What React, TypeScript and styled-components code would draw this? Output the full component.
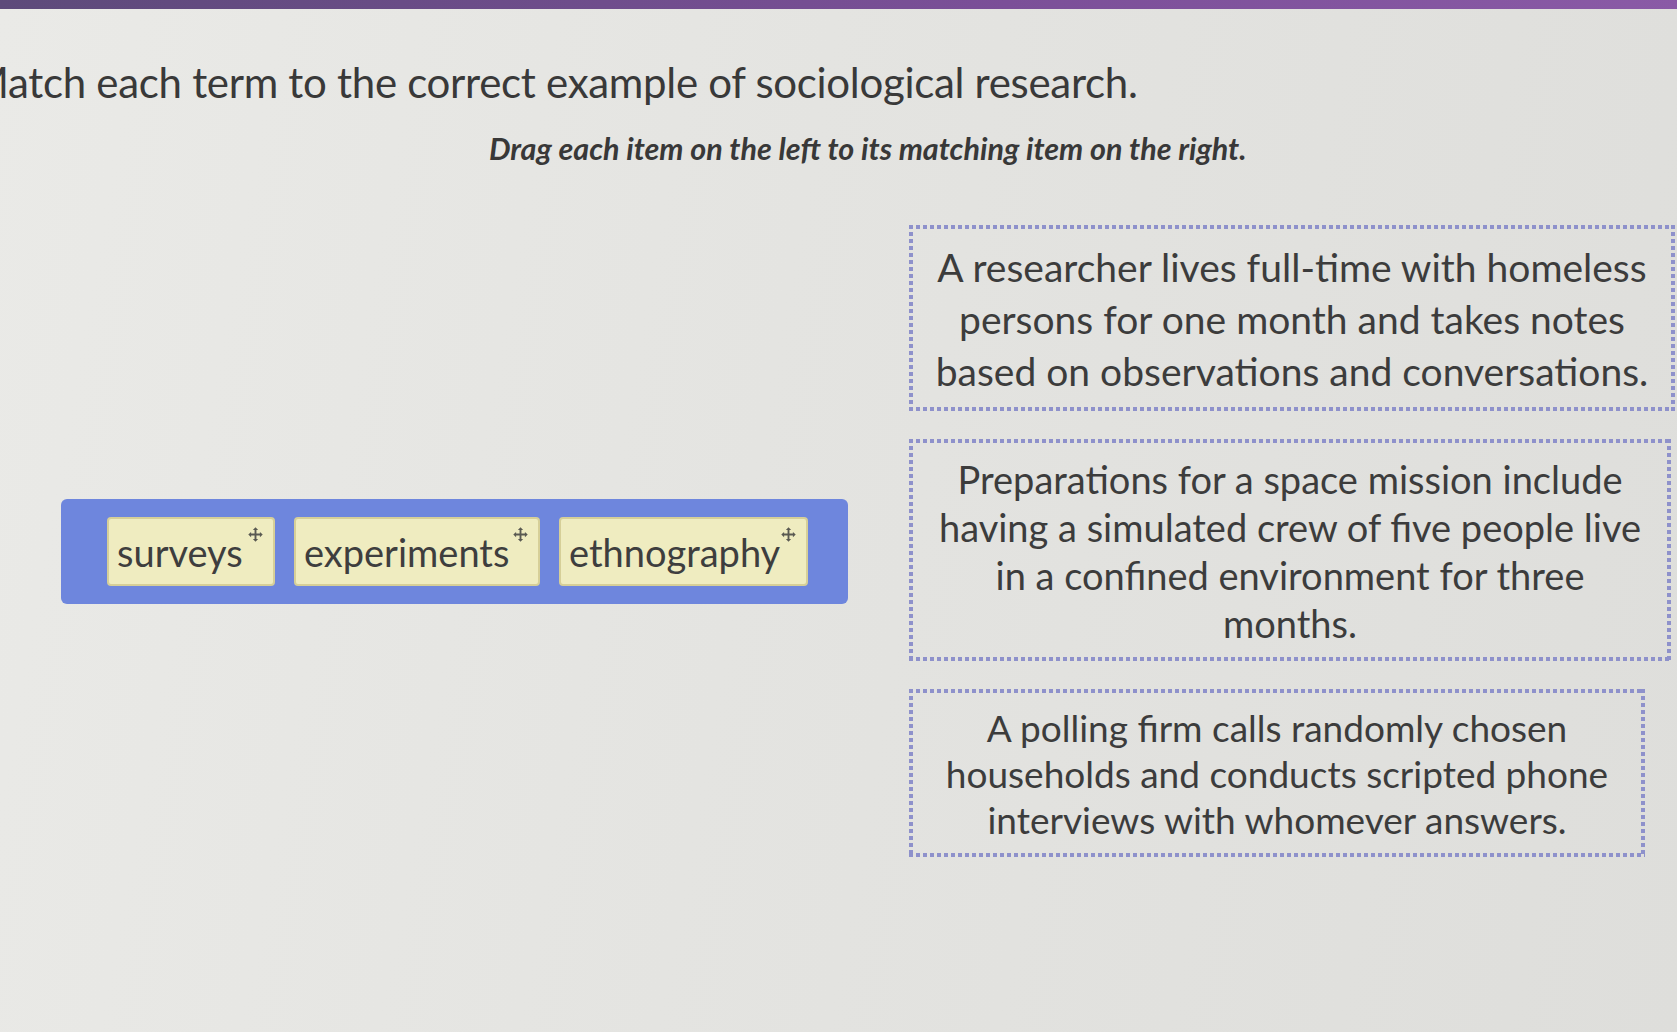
import React from 'react';
import styled, { createGlobalStyle } from 'styled-components';

const GlobalStyle = createGlobalStyle`
  html, body {
    margin: 0;
    padding: 0;
    width: 100%;
    height: 100%;
    overflow: hidden;
  }
  body {
    font-family: 'Lato', 'Noto Sans', sans-serif;
    color: #3c3c3c;
    background: #e4e4e1;
  }
`;

const Page = styled.div`
  width: 1677px;
  height: 1032px;
  overflow: hidden;
  background: linear-gradient(100deg, #eaeae7 0%, #e4e4e1 45%, #dededb 100%);
`;

const TopBar = styled.div`
  height: 9px;
  background: linear-gradient(90deg, #5d4a7a 0%, #7b4f98 60%, #8a5aa6 100%);
`;

const Title = styled.h1`
  margin: 48px 0 0 -30px;
  font-size: 42px;
  line-height: 50px;
  letter-spacing: -0.3px;
  font-weight: 400;
  white-space: nowrap;
  color: #393939;
`;

const Instructions = styled.p`
  margin: 23px 0 0 489px;
  font-size: 30.5px;
  line-height: 36px;
  font-weight: 700;
  font-style: italic;
  color: #383838;
`;

const Workspace = styled.div`
  display: flex;
  align-items: flex-start;
  margin-top: 59px;
`;

const SourceColumn = styled.div`
  width: 787px;
  margin-left: 61px;
  padding-top: 274px;
`;

const SourceTray = styled.div`
  height: 105px;
  box-sizing: border-box;
  padding: 0 0 0 46px;
  display: flex;
  align-items: center;
  gap: 19px;
  background: #6e86dd;
  border-radius: 6px;
`;

const Chip = styled.div<{ $width: number }>`
  position: relative;
  width: ${p => p.$width}px;
  height: 69px;
  box-sizing: border-box;
  display: flex;
  align-items: center;
  padding-left: 8px;
  background: #efecc0;
  border: 2px solid #d6cf98;
  border-radius: 4px;
  font-size: 38px;
  color: #3e3e3e;
`;

const MoveIcon = styled.svg`
  position: absolute;
  top: 8px;
  right: 10px;
  width: 15px;
  height: 15px;
`;

const TargetColumn = styled.div`
  margin-left: 61px;
  display: flex;
  flex-direction: column;
  gap: 28px;
`;

const dot = '#8e91cb';

const Target = styled.div<{ $width: number; $size: number; $line: number }>`
  width: ${p => p.$width}px;
  box-sizing: border-box;
  padding: 16px 16px 14px;
  background:
    linear-gradient(90deg, ${dot} 4px, transparent 0) top left / 7px 4px repeat-x,
    linear-gradient(90deg, ${dot} 4px, transparent 0) bottom left / 7px 4px repeat-x,
    linear-gradient(180deg, ${dot} 4px, transparent 0) top left / 4px 7px repeat-y,
    linear-gradient(180deg, ${dot} 4px, transparent 0) top right / 4px 7px repeat-y;
  font-size: ${p => p.$size}px;
  line-height: ${p => p.$line}px;
  text-align: center;
  color: #3c3c3c;
`;

const Move = () => (
  <MoveIcon viewBox="0 0 16 16">
    <path d="M8 2.5v11M2.5 8h11" fill="none" stroke="#5a5a52" strokeWidth="2" />
    <path
      d="M8 0.3l2.8 3h-5.6zM8 15.7l2.8-3h-5.6zM0.3 8l3-2.8v5.6zM15.7 8l-3-2.8v5.6z"
      fill="#5a5a52"
    />
  </MoveIcon>
);

const terms = [
  { label: 'surveys', width: 168 },
  { label: 'experiments', width: 246 },
  { label: 'ethnography', width: 249 },
];

const examples = [
  {
    width: 766,
    size: 39,
    line: 52,
    lines: [
      'A researcher lives full-time with homeless',
      'persons for one month and takes notes',
      'based on observations and conversations.',
    ],
  },
  {
    width: 762,
    size: 38,
    line: 48,
    lines: [
      'Preparations for a space mission include',
      'having a simulated crew of five people live',
      'in a confined environment for three',
      'months.',
    ],
  },
  {
    width: 736,
    size: 37,
    line: 46,
    lines: [
      'A polling firm calls randomly chosen',
      'households and conducts scripted phone',
      'interviews with whomever answers.',
    ],
  },
];

export default function App() {
  return (
    <Page>
      <GlobalStyle />
      <TopBar />
      <Title>Match each term to the correct example of sociological research.</Title>
      <Instructions>Drag each item on the left to its matching item on the right.</Instructions>
      <Workspace>
        <SourceColumn>
          <SourceTray>
            {terms.map(t => (
              <Chip key={t.label} $width={t.width}>
                {t.label}
                <Move />
              </Chip>
            ))}
          </SourceTray>
        </SourceColumn>
        <TargetColumn>
          {examples.map((ex, i) => (
            <Target key={i} $width={ex.width} $size={ex.size} $line={ex.line}>
              {ex.lines.map((line, j) => (
                <React.Fragment key={j}>
                  {line}
                  {j < ex.lines.length - 1 && <br />}
                </React.Fragment>
              ))}
            </Target>
          ))}
        </TargetColumn>
      </Workspace>
    </Page>
  );
}
